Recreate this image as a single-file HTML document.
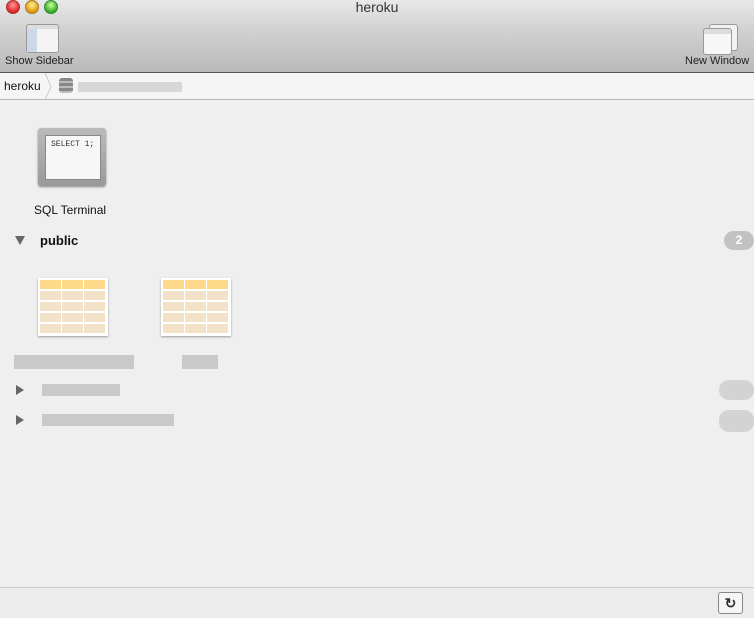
<!DOCTYPE html>
<html><head><style>
body{margin:0;width:754px;height:617px;overflow:hidden;background:#efefef;font-family:"Liberation Sans",sans-serif;position:relative}
.a{position:absolute}
.tb{left:0;top:0;width:754px;height:72px;background:linear-gradient(#e9e9e9,#d2d2d2 40%,#b9b9b9);border-bottom:1px solid #555}
.light{width:12px;height:12px;border-radius:50%;top:0px}
.bc{top:73px;left:0;width:754px;height:26px;background:#f5f5f5;border-bottom:1px solid #b5b5b5}
.cell{position:absolute;width:21px;height:9px;background:#f2e3c8}
.blur{background:#aaa;opacity:.7}
</style></head><body>
<div class="a tb"></div>
<div class="a light" style="left:6px;background:radial-gradient(circle at 50% 35%,#f99,#d22 70%);border:1px solid #a33"></div>
<div class="a light" style="left:25px;background:radial-gradient(circle at 50% 35%,#fe9,#d90 70%);border:1px solid #a73"></div>
<div class="a light" style="left:44px;background:radial-gradient(circle at 50% 35%,#cf9,#3a2 70%);border:1px solid #383"></div>
<div class="a" style="left:0;top:-1px;width:754px;text-align:center;font-size:14px;color:#333">heroku</div>
<div class="a" style="left:26px;top:24px;width:31px;height:27px;border:1px solid #999;border-radius:3px;background:linear-gradient(#ddd 0 4px,#f4f4f4 4px)"></div>
<div class="a" style="left:27px;top:29px;width:10px;height:23px;background:#cdd8e6"></div>
<div class="a" style="left:5px;top:55px;font-size:11px;color:#222">Show Sidebar</div>
<div class="a" style="left:709px;top:24px;width:27px;height:25px;border:1px solid #999;border-radius:3px;background:#f2f2f2"></div>
<div class="a" style="left:703px;top:28px;width:27px;height:25px;border:1px solid #999;border-radius:3px;background:linear-gradient(#ddd 0 5px,#f7f7f7 5px)"></div>
<div class="a" style="left:685px;top:55px;font-size:11px;color:#222">New Window</div>
<div class="a bc"></div>
<div class="a" style="left:4px;top:79px;font-size:12px;color:#111">heroku</div>
<svg class="a" style="left:44px;top:73px" width="10" height="27"><path d="M1 0 L7 13.5 L1 27" fill="none" stroke="#ccc"/></svg>
<div class="a" style="left:59px;top:78px;width:14px;height:15px;border-radius:3px;background:repeating-linear-gradient(#888 0 3px,#bbb 3px 5px)"></div>
<div class="a blur" style="left:78px;top:82px;width:104px;height:10px;opacity:.4"></div>
<div class="a" style="left:38px;top:128px;width:68px;height:58px;border-radius:3px;background:linear-gradient(#bbb,#999);box-shadow:0 1px 2px #888"></div>
<div class="a" style="left:45px;top:135px;width:54px;height:43px;background:#f7f7f7;border:1px solid #888"></div>
<div class="a" style="left:51px;top:140px;font-family:'Liberation Mono',monospace;font-size:8px;color:#333">SELECT 1;</div>
<div class="a" style="left:34px;top:203px;font-size:12px;color:#111">SQL Terminal</div>
<div class="a" style="left:15px;top:236px;width:0;height:0;border-left:5px solid transparent;border-right:5px solid transparent;border-top:9px solid #666"></div>
<div class="a" style="left:40px;top:233px;font-size:13px;font-weight:bold;color:#111">public</div>
<div class="a" style="left:724px;top:231px;width:30px;height:19px;border-radius:10px;background:#c2c2c2;color:#fff;font-weight:bold;font-size:12px;text-align:center;line-height:19px">2</div>
<div id="t1" class="a" style="left:38px;top:278px;width:70px;height:58px;background:#fff;box-shadow:0 1px 2px #999"></div>
<div id="t2" class="a" style="left:161px;top:278px;width:70px;height:58px;background:#fff;box-shadow:0 1px 2px #999"></div>
<div class="a blur" style="left:14px;top:355px;width:120px;height:14px;opacity:.55"></div>
<div class="a blur" style="left:182px;top:355px;width:36px;height:14px;opacity:.55"></div>
<div class="a" style="left:16px;top:385px;border-top:5px solid transparent;border-bottom:5px solid transparent;border-left:8px solid #666"></div>
<div class="a blur" style="left:42px;top:384px;width:78px;height:12px;opacity:.55"></div>
<div class="a" style="left:16px;top:415px;border-top:5px solid transparent;border-bottom:5px solid transparent;border-left:8px solid #666"></div>
<div class="a blur" style="left:42px;top:414px;width:132px;height:12px;opacity:.55"></div>
<div class="a blur" style="left:719px;top:380px;width:35px;height:20px;border-radius:10px;opacity:.4"></div>
<div class="a blur" style="left:719px;top:410px;width:35px;height:22px;border-radius:10px;opacity:.4"></div>
<div class="a" style="left:0;top:587px;width:754px;height:30px;background:#ececec;border-top:1px solid #ccc"></div>
<div class="a" style="left:718px;top:592px;width:23px;height:20px;border:1px solid #888;border-radius:3px;background:#f5f5f5;text-align:center;font-size:14px;line-height:20px;font-weight:bold;color:#333">↻</div>
<script>
for(const id of ['t1','t2']){const t=document.getElementById(id);
for(let r=0;r<5;r++)for(let c=0;c<3;c++){const d=document.createElement('div');d.className='cell';d.style.left=(2+c*22)+'px';d.style.top=(2+r*11)+'px';if(r==0)d.style.background='#fed98a';t.appendChild(d);}}
</script>
</body></html>
